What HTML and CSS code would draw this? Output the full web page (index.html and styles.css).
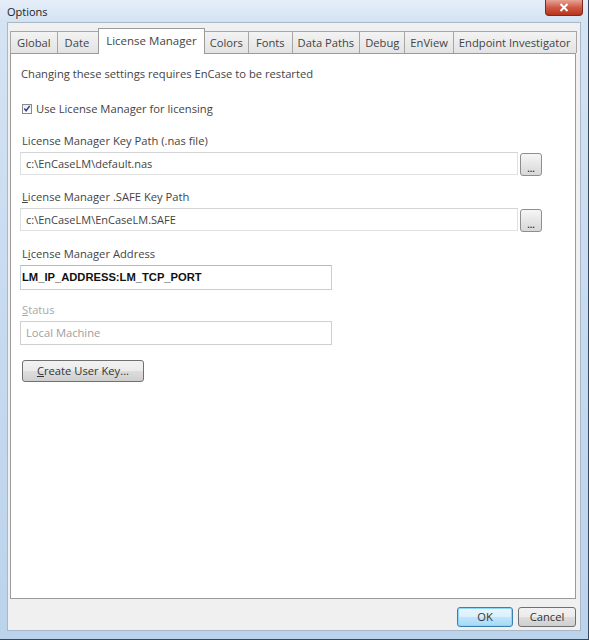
FILE: index.html
```html
<!DOCTYPE html>
<html>
<head>
<meta charset="utf-8">
<link rel="stylesheet" href="styles.css">
</head>
<body>
<div class="window">
  <div class="titlebar">
    <span class="title">Options</span>
    <div class="close"><svg width="10" height="9" viewBox="0 0 10 9"><path d="M1.5 1 L8.5 8 M8.5 1 L1.5 8" stroke="#fff" stroke-width="2"/></svg></div>
  </div>
  <div class="client">
    <div class="tabs">
      <div class="tab global">Global</div>
      <div class="tab date">Date</div>
      <div class="tab active">License Manager</div>
      <div class="tab">Colors</div>
      <div class="tab fonts">Fonts</div>
      <div class="tab">Data Paths</div>
      <div class="tab">Debug</div>
      <div class="tab">EnView</div>
      <div class="tab">Endpoint Investigator</div>
    </div>
    <div class="panel">
      <p class="note">Changing these settings requires EnCase to be restarted</p>
      <label class="check"><span class="box"><svg width="9" height="9" viewBox="0 0 9 9"><path d="M1.5 4.5 L3.5 7 L7.5 1.5" stroke="#2b3f7a" stroke-width="1.6" fill="none"/></svg></span>Use License Manager for licensing</label>
      <div class="field">
        <div class="label">License Manager Key Path (.nas file)</div>
        <div class="row">
          <div class="input wide">c:\EnCaseLM\default.nas</div>
          <div class="browse"><span>...</span></div>
        </div>
      </div>
      <div class="field second">
        <div class="label"><u>L</u>icense Manager .SAFE Key Path</div>
        <div class="row">
          <div class="input wide">c:\EnCaseLM\EnCaseLM.SAFE</div>
          <div class="browse"><span>...</span></div>
        </div>
      </div>
      <div class="field third">
        <div class="label">L<u>i</u>cense Manager Address</div>
        <div class="input short focus">LM_IP_ADDRESS:LM_TCP_PORT</div>
      </div>
      <div class="field last">
        <div class="label disabled"><u>S</u>tatus</div>
        <div class="input short dis">Local Machine</div>
      </div>
      <div class="btn create"><u>C</u>reate User Key...</div>
    </div>
    <div class="footer">
      <div class="btn ok">OK</div>
      <div class="btn cancel">Cancel</div>
    </div>
  </div>
</div>
</body>
</html>
```
FILE: styles.css
```css
html, body {
  margin: 0;
  padding: 0;
  background: #ffffff;
}
body {
  font-family: "Open Sans", "Noto Sans", sans-serif;
  font-size: 11.2px;
  color: #333;
  width: 589px;
  height: 640px;
  overflow: hidden;
}
.window {
  width: 589px;
  height: 640px;
  box-sizing: border-box;
  background: linear-gradient(#d6e4f3, #c9dcf0 40%, #bcd3ec);
  padding: 0 7px 8px 7px;
  display: flex;
  flex-direction: column;
  border-right: 1px solid #3a4a5e;
  border-bottom: 1px solid #3a4a5e;
}
.titlebar {
  height: 22px;
  display: flex;
  align-items: center;
  justify-content: space-between;
  margin: 0 -7px;
  padding-left: 7px;
  background: linear-gradient(#e6eff9, #d3e2f2);
}
.title {
  font-size: 11px;
  color: #222;
}
.close {
  width: 36px;
  height: 15px;
  margin-right: 5px;
  align-self: flex-start;
  border-radius: 0 0 4px 4px;
  background: linear-gradient(#e7a497, #cf5a45 50%, #b8331c);
  border: 1px solid #7f2a1d;
  border-top: none;
  display: flex;
  align-items: center;
  justify-content: center;
}
.client {
  flex: 1;
  background: #f0f0f0;
  border: 1px solid #a9b8c9;
  display: flex;
  flex-direction: column;
  padding: 4px 4px 0 2px;
}
.tabs {
  display: flex;
  align-items: flex-end;
  height: 26px;
  position: relative;
  z-index: 1;
}
.tab {
  height: 21px;
  line-height: 21px;
  padding: 0 5px;
  background: linear-gradient(#f3f3f3, #e3e3e3);
  border: 1px solid #a6a6a6;
  border-bottom: none;
  margin-right: -1px;
  color: #444;
  white-space: nowrap;
}
.tab.global {
  padding: 0 6px;
}
.tab.date {
  padding: 0 9px 0 7px;
}
.tab.fonts {
  padding: 0 7px;
}
.tab.active {
  height: 25px;
  line-height: 23px;
  background: #fff;
  padding: 0 7px;
  position: relative;
  top: 1px;
  font-size: 11.5px;
  border-color: #9a9a9a;
}
.panel {
  height: 546px;
  background: #fff;
  border: 1px solid #9a9a9a;
  box-sizing: border-box;
  padding: 8px 9px 0 9px;
}
.note {
  margin: 4px 0 20px 1px;
  color: #444;
}
.check {
  display: flex;
  align-items: center;
  gap: 4px;
  color: #444;
  margin: 0 0 16px 2px;
}
.box {
  width: 8px;
  height: 8px;
  border: 1px solid #8a8a8a;
  background: linear-gradient(#e9eef5, #fff);
  display: flex;
  align-items: center;
  justify-content: center;
}
.field {
  margin-bottom: 12px;
}
.field.second {
  margin-bottom: 13px;
}
.field.third {
  margin-bottom: 11px;
}
.field.last {
  margin-bottom: 0;
}
.label {
  color: #444;
  line-height: 17px;
  margin: 0 0 3px 2px;
}
.label.disabled {
  color: #a8a8a8;
}
.row {
  display: flex;
  align-items: flex-start;
  gap: 2px;
}
.input {
  height: 23px;
  line-height: 21px;
  box-sizing: border-box;
  border: 1px solid #e0e0e0;
  border-top-color: #d4d4d4;
  padding: 0 5px;
  font-size: 11px;
  color: #444;
  background: #fff;
}
.input.wide {
  width: 498px;
}
.input.short {
  width: 312px;
  height: 25px;
  line-height: 23px;
}
.input.focus {
  border: 1px solid #b9d2e8;
  border-top-color: #9fbfdd;
  font-family: "Liberation Sans", Arial, sans-serif;
  font-weight: bold;
  font-size: 11.2px;
  color: #111;
  padding-left: 1px;
}
.input.dis {
  height: 24px;
  line-height: 22px;
  border: 1px solid #cfcfcf;
  color: #a0a0a0;
  font-size: 11.2px;
}
.browse {
  width: 22px;
  height: 23px;
  box-sizing: border-box;
  border: 1px solid #8e8e8e;
  border-radius: 3px;
  background: linear-gradient(#f6f6f6, #e6e6e6 50%, #d8d8d8);
  display: flex;
  align-items: flex-end;
  justify-content: center;
  font-size: 9px;
  line-height: 13px;
  color: #333;
  font-weight: bold;
  margin-top: 1px;
}
.btn {
  box-sizing: border-box;
  border: 1px solid #707070;
  border-radius: 3px;
  background: linear-gradient(#f2f2f2, #ebebeb 50%, #dddddd 51%, #cfcfcf);
  text-align: center;
  color: #333;
}
.create {
  width: 122px;
  height: 22px;
  line-height: 20px;
  margin-top: 15px;
  margin-left: 2px;
}
.footer {
  flex: 1;
  display: flex;
  justify-content: flex-end;
  align-items: flex-start;
  gap: 5px;
  padding-top: 8px;
}
.ok, .cancel {
  width: 56px;
  height: 20px;
  line-height: 18px;
}
.ok {
  border-color: #3c7fb1;
  box-shadow: inset 0 0 0 1px #8fd5f7;
  background: linear-gradient(#eaf6fd, #d9f0fc 50%, #bee6fd 51%, #a7d9f5);
}
.cancel {
  width: 58px;
}
```
